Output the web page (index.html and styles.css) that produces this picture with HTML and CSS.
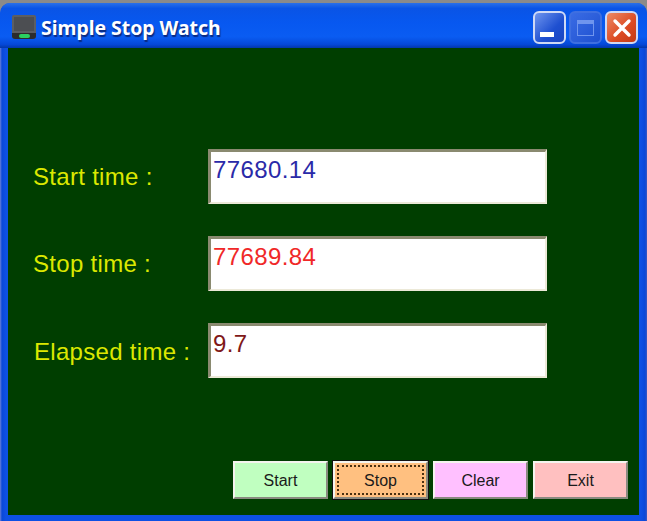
FILE: index.html
```html
<!DOCTYPE html>
<html lang="en">
<head>
    <meta charset="UTF-8">
    <meta name="viewport" content="width=device-width, initial-scale=1.0">
    <title>Simple Stop Watch</title>
    <link rel="stylesheet" href="styles.css">
</head>
<body>
    <div class="window">
        <div class="titlebar">
            <svg class="app-icon" width="25" height="25" viewBox="0 0 25 25">
                <rect x="0" y="0" width="24" height="23" rx="2" fill="#5c5e62"/>
                <rect x="2" y="2" width="20" height="14" fill="#4c4e52"/>
                <path d="M0 18 H24 V21 Q24 24 21 24 H3 Q0 24 0 21 Z" fill="#2c2c2c"/>
                <rect x="7" y="19" width="11" height="4" rx="2" fill="#2bd060"/>
            </svg>
            <span class="title">Simple Stop Watch</span>
            <div class="controls">
                <div class="ctl ctl-min"><span class="min-bar"></span></div>
                <div class="ctl ctl-max"><span class="max-box"></span></div>
                <div class="ctl ctl-close">
                    <svg width="22" height="22" viewBox="0 0 22 22">
                        <path d="M4 4 L18 18 M18 4 L4 18" stroke="#fff" stroke-width="3.4" stroke-linecap="round"/>
                    </svg>
                </div>
            </div>
        </div>
        <div class="client">
            <div class="fields">
                <div class="row">
                    <label class="label">Start time :</label>
                    <div class="field blue">77680.14</div>
                </div>
                <div class="row">
                    <label class="label">Stop time :</label>
                    <div class="field red">77689.84</div>
                </div>
                <div class="row">
                    <label class="label label-last">Elapsed time :</label>
                    <div class="field maroon">9.7</div>
                </div>
            </div>
            <div class="buttons">
                <button class="btn green">Start</button>
                <button class="btn orange focused"><span class="focus-ring">Stop</span></button>
                <button class="btn pink">Clear</button>
                <button class="btn rose">Exit</button>
            </div>
        </div>
    </div>
</body>
</html>
```

FILE: styles.css
```css
body {
    margin: 0;
    background-color: #8a8a8a;
}

.window {
    width: 647px;
    height: 518px;
    margin-top: 3px;
    display: flex;
    flex-direction: column;
    font-family: "Liberation Sans", Arial, sans-serif;
    overflow: hidden;
    border-radius: 10px 10px 0 0;
    background: linear-gradient(to right, #6a80d8 0, #0a48d8 2px, #0d50e4 6px, #0d50e4 641px, #0a48d8 645px, #3a58c0 647px);
}

.titlebar {
    height: 45px;
    flex: none;
    box-sizing: border-box;
    padding: 4px 9px 0 12px;
    display: flex;
    align-items: center;
    background: linear-gradient(to bottom, #2a70e8 0, #0a54e6 12%, #0758f0 45%, #0a5cf2 75%, #0548d8 92%, #0336a8 100%);
}

.app-icon {
    flex: none;
    margin-right: 4px;
}

.title {
    font-family: "Noto Sans", "Liberation Sans", sans-serif;
    font-size: 19.4px;
    font-weight: 700;
    color: #fff;
    text-shadow: 1px 2px 1px #0a2a80;
}

.controls {
    margin-left: auto;
    display: flex;
    gap: 3px;
}

.ctl {
    width: 33px;
    height: 33px;
    box-sizing: border-box;
    border: 2px solid #cfd9f5;
    border-radius: 6px;
    position: relative;
    display: flex;
    align-items: center;
    justify-content: center;
}

.ctl-min {
    background: linear-gradient(135deg, #6f95ee, #1e4fd0 60%, #1a45c0);
}

.ctl-max {
    border-color: #3f6fe0;
    background: linear-gradient(135deg, #3a6ce4, #1e50d0);
}

.ctl-close {
    background: linear-gradient(135deg, #ec8a66, #dc4a22 60%, #c23a16);
}

.min-bar {
    position: absolute;
    left: 5px;
    bottom: 5px;
    width: 14px;
    height: 5px;
    background-color: #fff;
}

.max-box {
    width: 17px;
    height: 16px;
    box-sizing: border-box;
    border: 1px solid #6f95ee;
    border-top-width: 4px;
}

.client {
    flex: 1;
    margin: 0 8px 6px;
    box-sizing: border-box;
    padding: 101px 11px 16px 25px;
    display: flex;
    flex-direction: column;
    background-color: #003e00;
}

.fields {
    display: flex;
    flex-direction: column;
    gap: 32px;
}

.row {
    display: flex;
    align-items: center;
}

.label {
    width: 175px;
    padding-top: 1px;
    font-size: 24px;
    letter-spacing: 0.3px;
    color: #dce800;
}

.label-last {
    width: 174px;
    padding: 3px 0 0 1px;
}

.field {
    width: 339px;
    height: 55px;
    box-sizing: border-box;
    padding: 3px 0 0 2px;
    font-size: 24px;
    letter-spacing: 0.4px;
    line-height: 30px;
    background-color: #fff;
    border-top: 3px solid #8a8a70;
    border-left: 3px solid #8a8a70;
    border-right: 2px solid #ece9d8;
    border-bottom: 2px solid #ece9d8;
}

.blue { color: #2a2aa8; }
.red { color: #f02828; }
.maroon { color: #801818; }

.buttons {
    margin-top: auto;
    display: flex;
    justify-content: flex-end;
    gap: 5px;
}

.btn {
    width: 95px;
    height: 38px;
    padding: 2px 0 0;
    font-family: "Liberation Sans", Arial, sans-serif;
    font-size: 16px;
    color: #1a1a1a;
    border: 2px solid;
    border-color: #f4f4ee #8a8a80 #8a8a80 #f4f4ee;
}

.green { background-color: #c0ffc0; }
.orange { background-color: #ffc080; }
.pink { background-color: #ffc0ff; }
.rose { background-color: #ffc0c0; }

.focused {
    outline: 1px solid #111;
    padding: 0;
}

.focus-ring {
    display: block;
    margin: 2px;
    padding-top: 2px;
    line-height: 24px;
    border: 2px dotted #4a3010;
}
```
